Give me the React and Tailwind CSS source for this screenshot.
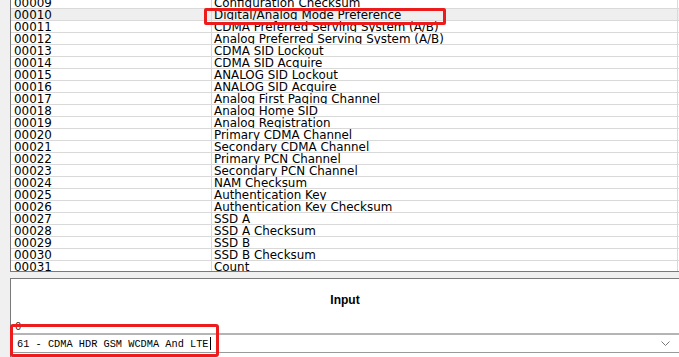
const ROWS = [
  ['00009', 'Configuration Checksum'],
  ['00010', 'Digital/Analog Mode Preference'],
  ['00011', 'CDMA Preferred Serving System (A/B)'],
  ['00012', 'Analog Preferred Serving System (A/B)'],
  ['00013', 'CDMA SID Lockout'],
  ['00014', 'CDMA SID Acquire'],
  ['00015', 'ANALOG SID Lockout'],
  ['00016', 'ANALOG SID Acquire'],
  ['00017', 'Analog First Paging Channel'],
  ['00018', 'Analog Home SID'],
  ['00019', 'Analog Registration'],
  ['00020', 'Primary CDMA Channel'],
  ['00021', 'Secondary CDMA Channel'],
  ['00022', 'Primary PCN Channel'],
  ['00023', 'Secondary PCN Channel'],
  ['00024', 'NAM Checksum'],
  ['00025', 'Authentication Key'],
  ['00026', 'Authentication Key Checksum'],
  ['00027', 'SSD A'],
  ['00028', 'SSD A Checksum'],
  ['00029', 'SSD B'],
  ['00030', 'SSD B Checksum'],
  ['00031', 'Count'],
]

function Row({ id, name, selected }) {
  return (
    <div
      className={`flex h-[12px] box-border border-b border-[#d9d9d9] overflow-hidden ${selected ? 'bg-[#efefef]' : 'bg-white'}`}
    >
      <div className="w-[201px] shrink-0 pl-[3px] border-r border-[#d9d9d9] leading-[12px]">{id}</div>
      <div className="flex-1 pl-[2px] border-r border-[#d9d9d9] leading-[12px] whitespace-nowrap">{name}</div>
      <div className="w-[1px] shrink-0" />
    </div>
  )
}

export default function App() {
  return (
    <div
      className="relative w-[679px] h-[357px] overflow-hidden bg-[#f0f0f0] text-black"
      style={{ fontFamily: '"DejaVu Sans", sans-serif' }}
    >
      {/* NV item list */}
      <div className="pl-[10px]">
        <div className="h-[272px] overflow-hidden bg-white border-l border-b border-[#7a7a7a] text-[11.9px]">
          <div className="mt-[-3px]">
            {ROWS.map(([id, name]) => (
              <Row key={id} id={id} name={name} selected={id === '00010'} />
            ))}
          </div>
        </div>
      </div>

      {/* Input panel */}
      <div className="mt-[6px] pl-[10px]">
        <div className="h-[80px] bg-white border-l border-t border-[#7a7a7a] flex flex-col">
          <div className="h-[42px] flex items-center justify-center">
            <span className="text-[12px] font-bold" style={{ fontFamily: '"Liberation Sans", sans-serif' }}>Input</span>
          </div>
          <div className="h-[12px] pl-[4px] text-[10px] leading-[12px] text-[#333]">0</div>
          <div className="h-[20px] border-t-2 border-b border-t-[#b4b4b4] border-b-[#9a9a9a] flex items-center pl-[6px] pr-[9px]">
            <span className="text-[10.3px] leading-[14px]" style={{ fontFamily: '"Liberation Mono", monospace' }}>
              61 - CDMA HDR GSM WCDMA And LTE
            </span>
            <span className="w-[1px] h-[13px] bg-black ml-[1px]" />
            <span className="ml-auto">
              <svg width="9" height="6" viewBox="0 0 9 6" fill="none" stroke="#777" strokeWidth="1">
                <path d="M0.5 0.5 L4.5 4.5 L8.5 0.5" />
              </svg>
            </span>
          </div>
        </div>
      </div>

      {/* annotation boxes */}
      <div className="absolute left-[204px] top-[8px] w-[242px] h-[17px] border-[3px] border-[#ec1c1c] rounded-[2px]" />
      <div className="absolute left-[10px] top-[324px] w-[209px] h-[33px] border-[3px] border-[#ec1c1c] rounded-[3px]" />
    </div>
  )
}
